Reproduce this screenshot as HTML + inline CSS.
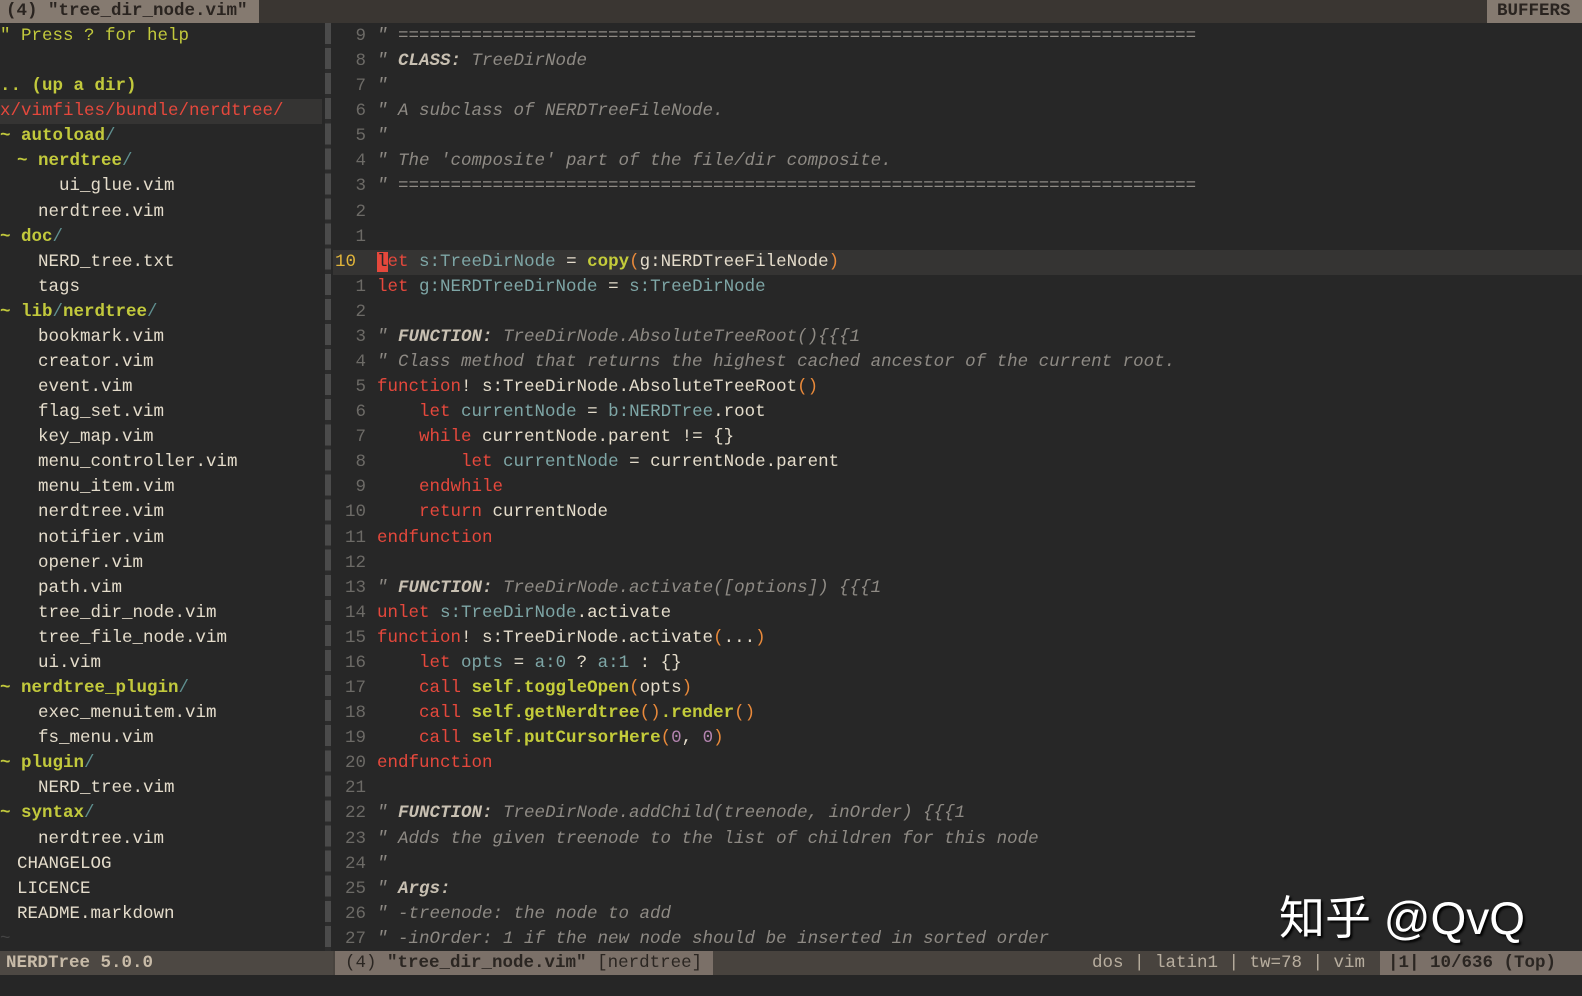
<!DOCTYPE html>
<html><head><meta charset="utf-8"><style>
*{margin:0;padding:0;box-sizing:border-box}
body{width:1582px;height:996px;background:#272727;overflow:hidden;position:relative;font-family:"Liberation Mono",monospace;font-size:17.5px;color:#e4dccb}
.tab{position:absolute;top:0;left:0;width:1582px;height:23px;background:#3a3632}
.tab .l{position:absolute;left:0;top:0;height:23px;width:259px;background:#857a70;color:#2a2420;font-weight:bold;padding-left:6px;line-height:22px}
.tab .r{position:absolute;right:0;top:0;height:23px;width:95px;background:#857a70;color:#2a2420;font-weight:bold;padding-left:10px;line-height:22px}
.pane{position:absolute;top:24px;line-height:25.08px}
.row{height:25.08px;position:relative;white-space:pre}
.row span.a{position:absolute;top:0}
#tree{left:0;width:322px;overflow:hidden}
#code{left:335px;width:1247px}
.y{color:#c2c93c}.yb{color:#c2c93c;font-weight:bold}.rd{color:#e5483c}.sl{color:#5f8f8f}.f{color:#e4dccb}
.cm{color:#8e8a84;font-style:italic}.cb{color:#c8c0b2;font-style:italic;font-weight:bold}
.kw{color:#e5483c}.id{color:#7ea6a6}.fn{color:#c4cc3a;font-weight:bold}.p{color:#e8893a}.n{color:#b484b0}
.ln{display:inline-block;width:31px;text-align:right;color:#6c6a66;margin-right:11px}
.cur{background:#353433}
.sep{position:absolute;left:325px;top:23px;width:6px;height:928px;background:repeating-linear-gradient(#4b4b4b 0 21px,#2c2c2c 21px 25.08px)}
.st{position:absolute;top:951px;height:24px;line-height:24px;font-weight:bold;white-space:pre}
</style></head><body>
<div class="tab"><div class="l">(4) "tree_dir_node.vim"</div><div class="r">BUFFERS</div></div>
<div class="sep"></div>
<div class="pane" id="tree">
<div class="row"><span class="a y" style="left:0">" Press ? for help</span></div>
<div class="row"></div>
<div class="row"><span class="a yb" style="left:0">.. (up a dir)</span></div>
<div class="row cur"><span class="a rd" style="left:0">x/vimfiles/bundle/nerdtree/</span></div>
<div class="row"><span class="a yb" style="left:0">~ autoload<span class="sl" style="font-weight:normal">/</span></span></div>
<div class="row"><span class="a yb" style="left:17px">~ nerdtree<span class="sl" style="font-weight:normal">/</span></span></div>
<div class="row"><span class="a f" style="left:59px">ui_glue.vim</span></div>
<div class="row"><span class="a f" style="left:38px">nerdtree.vim</span></div>
<div class="row"><span class="a yb" style="left:0">~ doc<span class="sl" style="font-weight:normal">/</span></span></div>
<div class="row"><span class="a f" style="left:38px">NERD_tree.txt</span></div>
<div class="row"><span class="a f" style="left:38px">tags</span></div>
<div class="row"><span class="a yb" style="left:0">~ lib<span class="sl" style="font-weight:normal">/</span>nerdtree<span class="sl" style="font-weight:normal">/</span></span></div>
<div class="row"><span class="a f" style="left:38px">bookmark.vim</span></div>
<div class="row"><span class="a f" style="left:38px">creator.vim</span></div>
<div class="row"><span class="a f" style="left:38px">event.vim</span></div>
<div class="row"><span class="a f" style="left:38px">flag_set.vim</span></div>
<div class="row"><span class="a f" style="left:38px">key_map.vim</span></div>
<div class="row"><span class="a f" style="left:38px">menu_controller.vim</span></div>
<div class="row"><span class="a f" style="left:38px">menu_item.vim</span></div>
<div class="row"><span class="a f" style="left:38px">nerdtree.vim</span></div>
<div class="row"><span class="a f" style="left:38px">notifier.vim</span></div>
<div class="row"><span class="a f" style="left:38px">opener.vim</span></div>
<div class="row"><span class="a f" style="left:38px">path.vim</span></div>
<div class="row"><span class="a f" style="left:38px">tree_dir_node.vim</span></div>
<div class="row"><span class="a f" style="left:38px">tree_file_node.vim</span></div>
<div class="row"><span class="a f" style="left:38px">ui.vim</span></div>
<div class="row"><span class="a yb" style="left:0">~ nerdtree_plugin<span class="sl" style="font-weight:normal">/</span></span></div>
<div class="row"><span class="a f" style="left:38px">exec_menuitem.vim</span></div>
<div class="row"><span class="a f" style="left:38px">fs_menu.vim</span></div>
<div class="row"><span class="a yb" style="left:0">~ plugin<span class="sl" style="font-weight:normal">/</span></span></div>
<div class="row"><span class="a f" style="left:38px">NERD_tree.vim</span></div>
<div class="row"><span class="a yb" style="left:0">~ syntax<span class="sl" style="font-weight:normal">/</span></span></div>
<div class="row"><span class="a f" style="left:38px">nerdtree.vim</span></div>
<div class="row"><span class="a f" style="left:17px">CHANGELOG</span></div>
<div class="row"><span class="a f" style="left:17px">LICENCE</span></div>
<div class="row"><span class="a f" style="left:17px">README.markdown</span></div>
<div class="row"><span class="a" style="left:0;color:#444">~</span></div>
</div>
<div class="pane" id="code">
<div class="row"><span class="ln">9</span><span class="cm">" ============================================================================</span></div>
<div class="row"><span class="ln">8</span><span class="cm">" <span class="cb">CLASS:</span> TreeDirNode</span></div>
<div class="row"><span class="ln">7</span><span class="cm">"</span></div>
<div class="row"><span class="ln">6</span><span class="cm">" A subclass of NERDTreeFileNode.</span></div>
<div class="row"><span class="ln">5</span><span class="cm">"</span></div>
<div class="row"><span class="ln">4</span><span class="cm">" The 'composite' part of the file/dir composite.</span></div>
<div class="row"><span class="ln">3</span><span class="cm">" ============================================================================</span></div>
<div class="row"><span class="ln">2</span></div>
<div class="row"><span class="ln">1</span></div>
<div class="row cur" style="margin-left:-2px;width:1249px"><span style="display:inline-block;width:44px;color:#e0b43a;padding-left:2px">10</span><span class="kw"><span style="background:#e5483c;color:#272727">l</span>et</span> <span class="id">s:TreeDirNode</span> = <span class="fn">copy</span><span class="p">(</span>g:NERDTreeFileNode<span class="p">)</span></div>
<div class="row"><span class="ln">1</span><span class="kw">let</span> <span class="id">g:NERDTreeDirNode</span> = <span class="id">s:TreeDirNode</span></div>
<div class="row"><span class="ln">2</span></div>
<div class="row"><span class="ln">3</span><span class="cm">" <span class="cb">FUNCTION:</span> TreeDirNode.AbsoluteTreeRoot(){{{1</span></div>
<div class="row"><span class="ln">4</span><span class="cm">" Class method that returns the highest cached ancestor of the current root.</span></div>
<div class="row"><span class="ln">5</span><span class="kw">function</span>! s:TreeDirNode.AbsoluteTreeRoot<span class="p">()</span></div>
<div class="row"><span class="ln">6</span>    <span class="kw">let</span> <span class="id">currentNode</span> = <span class="id">b:NERDTree</span>.root</div>
<div class="row"><span class="ln">7</span>    <span class="kw">while</span> currentNode.parent != {}</div>
<div class="row"><span class="ln">8</span>        <span class="kw">let</span> <span class="id">currentNode</span> = currentNode.parent</div>
<div class="row"><span class="ln">9</span>    <span class="kw">endwhile</span></div>
<div class="row"><span class="ln">10</span>    <span class="kw">return</span> currentNode</div>
<div class="row"><span class="ln">11</span><span class="kw">endfunction</span></div>
<div class="row"><span class="ln">12</span></div>
<div class="row"><span class="ln">13</span><span class="cm">" <span class="cb">FUNCTION:</span> TreeDirNode.activate([options]) {{{1</span></div>
<div class="row"><span class="ln">14</span><span class="kw">unlet</span> <span class="id">s:TreeDirNode</span>.activate</div>
<div class="row"><span class="ln">15</span><span class="kw">function</span>! s:TreeDirNode.activate<span class="p">(</span>...<span class="p">)</span></div>
<div class="row"><span class="ln">16</span>    <span class="kw">let</span> <span class="id">opts</span> = <span class="id">a:0</span> ? <span class="id">a:1</span> : {}</div>
<div class="row"><span class="ln">17</span>    <span class="kw">call</span> <span class="fn">self.toggleOpen</span><span class="p">(</span>opts<span class="p">)</span></div>
<div class="row"><span class="ln">18</span>    <span class="kw">call</span> <span class="fn">self.getNerdtree</span><span class="p">()</span><span class="fn">.render</span><span class="p">()</span></div>
<div class="row"><span class="ln">19</span>    <span class="kw">call</span> <span class="fn">self.putCursorHere</span><span class="p">(</span><span class="n">0</span>, <span class="n">0</span><span class="p">)</span></div>
<div class="row"><span class="ln">20</span><span class="kw">endfunction</span></div>
<div class="row"><span class="ln">21</span></div>
<div class="row"><span class="ln">22</span><span class="cm">" <span class="cb">FUNCTION:</span> TreeDirNode.addChild(treenode, inOrder) {{{1</span></div>
<div class="row"><span class="ln">23</span><span class="cm">" Adds the given treenode to the list of children for this node</span></div>
<div class="row"><span class="ln">24</span><span class="cm">"</span></div>
<div class="row"><span class="ln">25</span><span class="cm">" <span class="cb">Args:</span></span></div>
<div class="row"><span class="ln">26</span><span class="cm">" -treenode: the node to add</span></div>
<div class="row"><span class="ln">27</span><span class="cm">" -inOrder: 1 if the new node should be inserted in sorted order</span></div>
</div>
<div style="position:absolute;left:1279px;top:882px;font-family:'Liberation Sans','Noto Sans CJK SC',sans-serif;font-size:46px;color:#fff;text-shadow:2px 2px 2px #000;white-space:pre">知乎 @QvQ</div>
<div class="st" style="left:0;width:333px;background:#4d4843;color:#c8bba8;padding-left:6px">NERDTree 5.0.0</div>
<div class="st" style="left:333px;width:1249px;background:#48433e"></div>
<div class="st" style="left:335px;width:378px;background:#7b7068;color:#2b2622;padding-left:10px;font-weight:normal">(4) <b>"tree_dir_node.vim"</b> [nerdtree]</div>
<div class="st" style="left:1092px;color:#b8ae9f;font-weight:normal">dos | latin1 | tw=78 | vim</div>
<div class="st" style="left:1380px;width:202px;background:#7b7068;color:#2b2622;padding-left:8px">|1| 10/636 (Top)</div>
<div style="position:absolute;left:0;top:975px;width:1582px;height:21px;background:#262626"></div>
</body></html>
